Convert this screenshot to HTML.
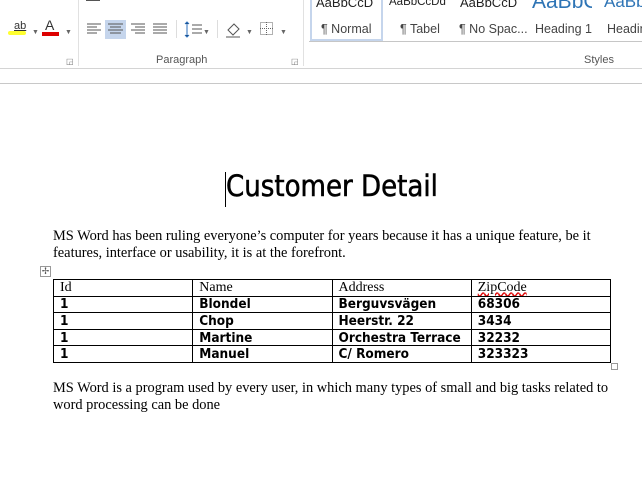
<!DOCTYPE html>
<html><head><meta charset="utf-8"><style>
*{margin:0;padding:0;box-sizing:border-box}
body{width:642px;height:499px;overflow:hidden;background:#fff;position:relative;font-family:"Liberation Sans",sans-serif}
.rib{position:absolute;left:0;top:0;width:642px;height:69px;background:#fff;border-bottom:1px solid #d4d4d4}
.strip{position:absolute;left:0;top:69px;width:642px;height:15px;background:#fff;border-bottom:1px solid #c8c8c8}
.a{position:absolute}
.sep{position:absolute;width:1px;background:#e1e1e1}
.lab{position:absolute;font-size:11px;color:#555}
.sty{position:absolute;top:0;font-size:12px;color:#222;white-space:nowrap}
.doc{position:absolute;font-family:"Liberation Serif",serif;font-size:14.4px;color:#000;line-height:17px}
table{position:absolute;left:53px;top:279px;border-collapse:collapse;width:558px;table-layout:fixed}
td{border:1px solid #000;height:16.6px;padding:0 6px;font-size:13.5px;line-height:14px;font-family:"DejaVu Sans Condensed","DejaVu Sans",sans-serif;font-weight:bold;vertical-align:middle;white-space:nowrap;overflow:hidden}
tr.h td{font-family:"Liberation Serif",serif;font-weight:normal;font-size:14px}
</style></head><body>
<div class="rib">
  <div class="a" style="left:14px;top:20px;font-size:11px;color:#333;text-decoration:underline">ab</div>
  <div class="a" style="left:8px;top:31px;width:18px;height:4px;background:#ffff30;border-radius:2px"></div>
  <div class="a" style="left:32px;top:29px;font-size:7px;color:#666">▼</div>
  <div class="a" style="left:45px;top:17px;font-size:14px;color:#333">A</div>
  <div class="a" style="left:42px;top:32px;width:17px;height:4px;background:#d00"></div>
  <div class="a" style="left:65px;top:29px;font-size:7px;color:#666">▼</div>
  <div class="a" style="left:66px;top:57px;font-size:8px;color:#777">◲</div>
  <div class="sep" style="left:78px;top:0;height:66px"></div>
  <div class="a" style="left:86px;top:0;width:14px;height:2px;border-top:1px solid #555"></div>
  <svg class="a" style="left:84px;top:20px" width="100" height="20" stroke="#555" stroke-width="1">
    <path d="M3 4h14M3 7h10M3 10h14M3 13h10"/>
    <rect x="21" y="0" width="21" height="19" fill="#c5d5ec" stroke="none"/>
    <path d="M24 4h15M26 7h11M24 10h15M26 13h11"/>
    <path d="M47 4h14M51 7h10M47 10h14M51 13h10"/>
    <path d="M69 4h14M69 7h14M69 10h14M69 13h14"/>
  </svg>
  <div class="sep" style="left:176px;top:20px;height:18px;background:#ddd"></div>
  <svg class="a" style="left:183px;top:20px" width="30" height="20" stroke="#555"><path d="M4 2v15M2 4l2-2 2 2M2 15l2 2 2-2" stroke="#2a6ebb"/><path d="M9 5h10M9 9h10M9 13h10"/></svg>
  <div class="a" style="left:203px;top:29px;font-size:7px;color:#666">▼</div>
  <div class="sep" style="left:217px;top:20px;height:18px;background:#ddd"></div>
  <svg class="a" style="left:224px;top:20px" width="20" height="20" stroke="#555" fill="none"><path d="M4 10l6-6 5 5-6 6z"/><path d="M2 17h14" stroke="#aaa" stroke-width="2"/></svg>
  <div class="a" style="left:246px;top:29px;font-size:7px;color:#666">▼</div>
  <svg class="a" style="left:259px;top:21px" width="16" height="16" stroke="#666" stroke-dasharray="1 1" fill="none"><rect x="1.5" y="1.5" width="12" height="12"/><path d="M7.5 1v13M1 7.5h13"/></svg>
  <div class="a" style="left:280px;top:29px;font-size:7px;color:#666">▼</div>
  <div class="lab" style="left:156px;top:54px">Paragraph</div>
  <div class="a" style="left:291px;top:57px;font-size:8px;color:#777">◲</div>
  <div class="sep" style="left:303px;top:0;height:66px"></div>
  <div class="a" style="left:310px;top:0;width:73px;height:41px;border-top:none;border-left:2px solid #c5d5ec;border-right:2px solid #c5d5ec;border-bottom:2px solid #c5d5ec"></div>
  <div class="a" style="left:309px;top:41px;width:333px;height:1px;background:#c6c6c6"></div>
  <div class="sty" style="left:316px;top:-5px;font-size:13px">AaBbCcD</div>
  <div class="sty" style="left:389px;top:-4px;font-size:11.5px">AaBbCcDd</div>
  <div class="sty" style="left:460px;top:-5px;font-size:13px">AaBbCcD</div>
  <div class="sty" style="left:532px;top:-10px;font-size:21px;color:#2e74b5">AaBbC</div>
  <div class="a" style="left:592px;top:0;width:8px;height:16px;background:#fff"></div>
  <div class="sty" style="left:604px;top:-8px;font-size:17px;color:#2e74b5">AaBbC</div>
  <div class="sty" style="left:321px;top:22px;color:#444;font-size:12.5px">¶ Normal</div>
  <div class="sty" style="left:400px;top:22px;color:#444;font-size:12.5px">¶ Tabel</div>
  <div class="sty" style="left:459px;top:22px;color:#444;font-size:12.5px">¶ No Spac...</div>
  <div class="sty" style="left:535px;top:22px;color:#444;font-size:12.5px">Heading 1</div>
  <div class="sty" style="left:607px;top:22px;color:#444;font-size:12.5px">Headin</div>
  <div class="lab" style="left:584px;top:54px">Styles</div>
</div>
<div class="strip"></div>

<div class="a" style="left:225px;top:172px;width:1px;height:35px;background:#000"></div>
<div class="a" style="left:226px;top:172px;font-family:'DejaVu Sans Condensed','DejaVu Sans',sans-serif;font-size:29px;line-height:29px;color:#000;white-space:nowrap;-webkit-text-stroke:0.5px #000">Customer Detail</div>

<div class="doc" style="left:53px;top:228px;width:575px">MS Word has been ruling everyone’s computer for years because it has a unique feature, be it features, interface or usability, it is at the forefront.</div>

<div class="a" style="left:40px;top:266px;width:11px;height:11px;border:1px solid #999;font-size:9px;line-height:9px;text-align:center;color:#555">✢</div>
<table>
<tr class="h"><td>Id</td><td>Name</td><td>Address</td><td><span style="text-decoration:underline wavy #d00">ZipCode</span></td></tr>
<tr><td>1</td><td>Blondel</td><td>Berguvsvägen</td><td>68306</td></tr>
<tr><td>1</td><td>Chop</td><td>Heerstr. 22</td><td>3434</td></tr>
<tr><td>1</td><td>Martine</td><td>Orchestra Terrace</td><td>32232</td></tr>
<tr><td>1</td><td>Manuel</td><td>C/ Romero</td><td>323323</td></tr>
</table>
<div class="a" style="left:611px;top:363px;width:7px;height:7px;border:1px solid #999"></div>

<div class="doc" style="left:53px;top:380px;width:575px">MS Word is a program used by every user, in which many types of small and big tasks related to word processing can be done</div>
</body></html>
